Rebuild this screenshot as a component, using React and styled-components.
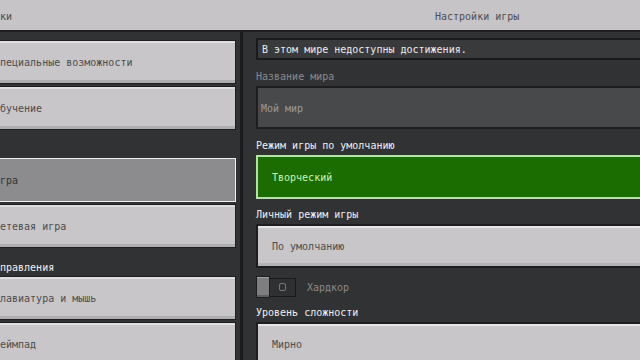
import styled, { createGlobalStyle } from "styled-components";

const GlobalStyle = createGlobalStyle`
  html, body {
    margin: 0;
    padding: 0;
  }
  body {
    background: #313233;
    font-family: "DejaVu Sans Mono", "Liberation Mono", monospace;
    font-size: 10px;
    overflow: hidden;
  }
  * {
    box-sizing: border-box;
  }
`;

const Screen = styled.div`
  width: 640px;
  height: 360px;
  overflow: hidden;
  display: flex;
  flex-direction: column;
`;

const Header = styled.header`
  height: 32px;
  flex-shrink: 0;
  background: #c6c4c7;
  border-bottom: 2px solid #1e1e1f;
  display: grid;
  grid-template-columns: 248px 1fr;
  align-items: center;
  color: #4f4f50;
`;

const HeaderBack = styled.span`
  padding-top: 2px;
`;

const HeaderTitle = styled.span`
  padding: 2px 0 0 187px;
`;

const Body = styled.div`
  flex: 1;
  min-height: 0;
  display: grid;
  grid-template-columns: 243px 1fr;
`;

const Sidebar = styled.nav`
  border-right: 3px solid #1b1b1c;
  padding: 8px 4px 0 0;
  display: flex;
  flex-direction: column;
  overflow: hidden;
`;

const GroupTitle = styled.div`
  height: 26px;
  display: flex;
  align-items: flex-end;
  padding-bottom: 2px;
  line-height: 12px;
  color: #f0f0f0;
`;

const NavButton = styled.div`
  height: 44px;
  flex-shrink: 0;
  margin-bottom: 2px;
  display: flex;
  align-items: center;
  padding-top: 1px;
  background: ${(props) => (props.active ? "#8c8b8d" : "#c8c6c9")};
  color: ${(props) => (props.active ? "#333334" : "#4c4c4d")};
  border: 1px solid ${(props) => (props.active ? "#efefef" : "#1e1e1f")};
  border-left: none;
  box-shadow: ${(props) =>
    props.active
      ? "none"
      : "inset 0 2px 0 #dedde0, inset 0 -3px 0 #aeadb0"};
`;

const Content = styled.main`
  padding: 6px 0 0 13px;
  display: flex;
  flex-direction: column;
  overflow: hidden;
`;

const InfoBox = styled.div`
  height: 22px;
  flex-shrink: 0;
  margin-right: -4px;
  display: flex;
  align-items: center;
  padding-left: 4px;
  background: #393a3b;
  border: 2px solid #1a1a1b;
  color: #ececec;
`;

const Label = styled.div`
  height: ${(props) => props.size || 26}px;
  flex-shrink: 0;
  display: flex;
  align-items: flex-end;
  padding-bottom: 3px;
  line-height: 12px;
  color: ${(props) => (props.disabled ? "#8a8a8b" : "#f0f0f0")};
`;

const TextField = styled.div`
  height: 43px;
  flex-shrink: 0;
  margin-right: -4px;
  display: flex;
  align-items: center;
  padding: 1px 0 0 3px;
  background: #48494a;
  border: 2px solid #1e1e1f;
  color: #9b9b9c;
`;

const Dropdown = styled.div`
  height: 44px;
  flex-shrink: 0;
  margin-right: -4px;
  display: flex;
  align-items: center;
  padding: 1px 0 0 14px;
  background: ${(props) => (props.selected ? "#1b6d02" : "#c8c6c9")};
  border: 2px solid ${(props) => (props.selected ? "#b4e2a4" : "#1e1e1f")};
  color: ${(props) => (props.selected ? "#c8f5b5" : "#4c4c4d")};
  box-shadow: ${(props) =>
    props.selected ? "none" : "inset 0 2px 0 #e6e5e8, inset 0 -3px 0 #b3b2b5"};
`;

const ToggleRow = styled.div`
  height: 22px;
  flex-shrink: 0;
  margin-top: 8px;
  display: flex;
  align-items: center;
  color: #8a8a8b;
`;

const Toggle = styled.div`
  display: flex;
  align-items: center;
  margin-right: 11px;
`;

const Knob = styled.div`
  width: 14px;
  height: 22px;
  background: #7e7e80;
  border: 1px solid #1e1e1f;
  box-shadow: inset 0 1px 0 #a3a3a5, inset 0 -2px 0 #5f5f61;
`;

const Track = styled.div`
  width: 26px;
  height: 19px;
  display: flex;
  align-items: center;
  justify-content: center;
  background: #2f3031;
  border: 1px solid #1a1a1b;
  border-left: none;
`;

const OffMark = styled.span`
  width: 7px;
  height: 8px;
  border: 1px solid #77777a;
  border-radius: 2px;
`;

const groups = [
  { title: "", items: [{ label: "пециальные возможности" }, { label: "бучение" }] },
  { title: "", items: [{ label: "гра", active: true }, { label: "етевая игра" }] },
  { title: "правления", items: [{ label: "лавиатура и мышь" }, { label: "еймпад" }] },
];

export default function App() {
  return (
    <Screen>
      <GlobalStyle />
      <Header>
        <HeaderBack>ки</HeaderBack>
        <HeaderTitle>Настройки игры</HeaderTitle>
      </Header>
      <Body>
        <Sidebar>
          {groups.map((group, i) => (
            <div key={i}>
              {i > 0 && <GroupTitle>{group.title}</GroupTitle>}
              {group.items.map((item) => (
                <NavButton key={item.label} active={item.active}>
                  {item.label}
                </NavButton>
              ))}
            </div>
          ))}
        </Sidebar>
        <Content>
          <InfoBox>В этом мире недоступны достижения.</InfoBox>
          <Label disabled>Название мира</Label>
          <TextField>Мой мир</TextField>
          <Label>Режим игры по умолчанию</Label>
          <Dropdown selected>Творческий</Dropdown>
          <Label size={25}>Личный режим игры</Label>
          <Dropdown>По умолчанию</Dropdown>
          <ToggleRow>
            <Toggle>
              <Knob />
              <Track>
                <OffMark />
              </Track>
            </Toggle>
            Хардкор
          </ToggleRow>
          <Label size={24}>Уровень сложности</Label>
          <Dropdown>Мирно</Dropdown>
        </Content>
      </Body>
    </Screen>
  );
}
